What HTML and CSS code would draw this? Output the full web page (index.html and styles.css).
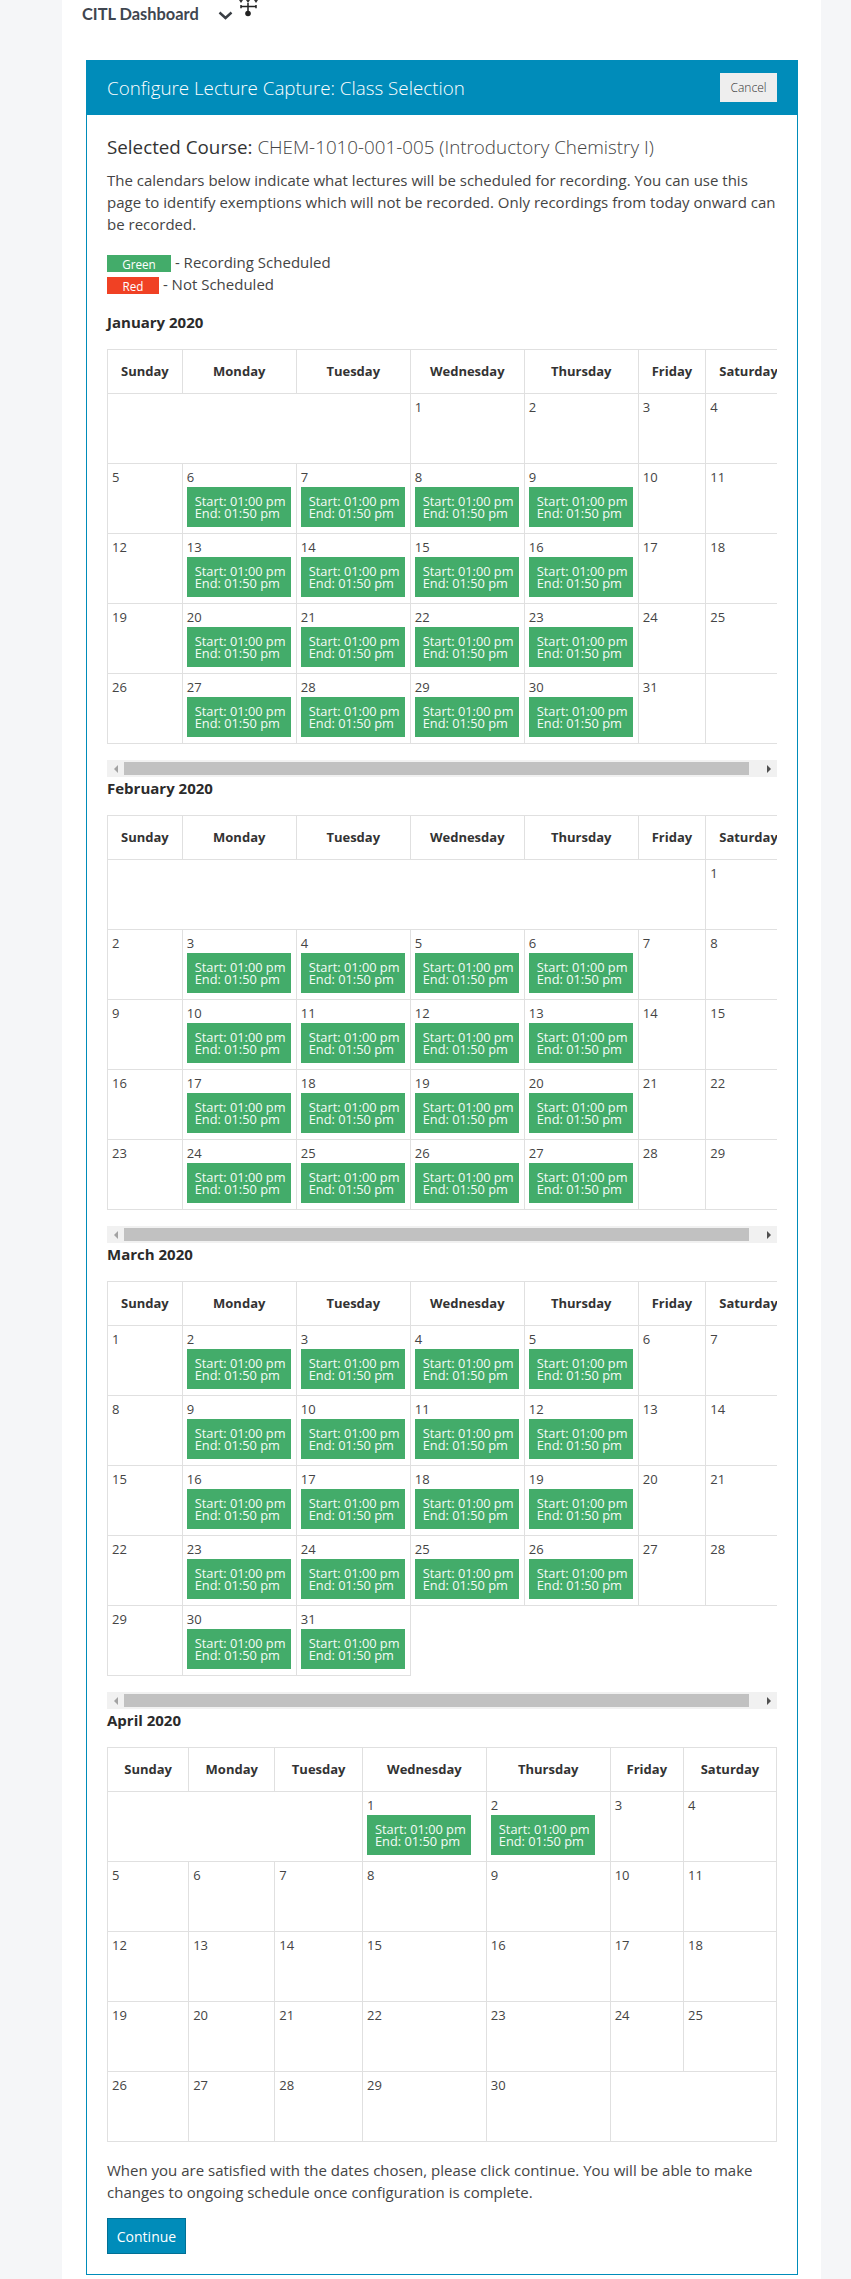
FILE: index.html
```html
<!DOCTYPE html>
<html lang="en">
<head>
<meta charset="utf-8">
<title>Configure Lecture Capture</title>
<link rel="stylesheet" href="styles.css">
</head>
<body>
<main class="page">
  <header class="topbar">
    <span class="brand">CITL Dashboard</span>
    <svg class="chev" width="15" height="9" viewBox="0 0 15 9"><path d="M1.5 1.5 7.5 7 13.5 1.5" fill="none" stroke="#3a3f45" stroke-width="2.4"/></svg>
    <svg class="grip" width="20" height="17" viewBox="0 0 20 17"><path d="M0 0h4L2 3zM7 0h4L9 3zM15 0h4L17 3z" fill="#333"/><path d="M2 6.6h15M9 3v9" fill="none" stroke="#222" stroke-width="1.5"/><path d="M2 5v3.2M17 5v3.2" stroke="#222" stroke-width="1.5"/><circle cx="9" cy="13.5" r="2.8" fill="#222"/></svg>
  </header>
  <section class="panel">
    <div class="panel-head">
      <h1>Configure Lecture Capture: Class Selection</h1>
      <button class="cancel">Cancel</button>
    </div>
    <div class="panel-body">
      <h2 class="course">Selected Course: <span>CHEM-1010-001-005 (Introductory Chemistry I)</span></h2>
      <p class="intro">The calendars below indicate what lectures will be scheduled for recording. You can use this page to identify exemptions which will not be recorded. Only recordings from today onward can be recorded.</p>
      <div class="legend">
        <div><span class="badge green">Green</span> - Recording Scheduled</div>
        <div><span class="badge red">Red</span> - Not Scheduled</div>
      </div>

      <h3 class="month first">January 2020</h3>
      <div class="clip"><table class="cal">
        <thead><tr><th>Sunday</th><th>Monday</th><th>Tuesday</th><th>Wednesday</th><th>Thursday</th><th>Friday</th><th>Saturday</th></tr></thead>
        <tbody>
          <tr><td colspan="3"></td><td>1</td><td>2</td><td>3</td><td>4</td></tr>
          <tr><td>5</td><td>6<div class="slot">Start: 01:00 pm<br>End: 01:50 pm</div></td><td>7<div class="slot">Start: 01:00 pm<br>End: 01:50 pm</div></td><td>8<div class="slot">Start: 01:00 pm<br>End: 01:50 pm</div></td><td>9<div class="slot">Start: 01:00 pm<br>End: 01:50 pm</div></td><td>10</td><td>11</td></tr>
          <tr><td>12</td><td>13<div class="slot">Start: 01:00 pm<br>End: 01:50 pm</div></td><td>14<div class="slot">Start: 01:00 pm<br>End: 01:50 pm</div></td><td>15<div class="slot">Start: 01:00 pm<br>End: 01:50 pm</div></td><td>16<div class="slot">Start: 01:00 pm<br>End: 01:50 pm</div></td><td>17</td><td>18</td></tr>
          <tr><td>19</td><td>20<div class="slot">Start: 01:00 pm<br>End: 01:50 pm</div></td><td>21<div class="slot">Start: 01:00 pm<br>End: 01:50 pm</div></td><td>22<div class="slot">Start: 01:00 pm<br>End: 01:50 pm</div></td><td>23<div class="slot">Start: 01:00 pm<br>End: 01:50 pm</div></td><td>24</td><td>25</td></tr>
          <tr><td>26</td><td>27<div class="slot">Start: 01:00 pm<br>End: 01:50 pm</div></td><td>28<div class="slot">Start: 01:00 pm<br>End: 01:50 pm</div></td><td>29<div class="slot">Start: 01:00 pm<br>End: 01:50 pm</div></td><td>30<div class="slot">Start: 01:00 pm<br>End: 01:50 pm</div></td><td>31</td><td></td></tr>
        </tbody>
      </table></div>
      <div class="scrollbar"><span class="sb-btn"><i class="arrow left"></i></span><span class="thumb"></span><span class="sb-btn"><i class="arrow right"></i></span></div>

      <h3 class="month">February 2020</h3>
      <div class="clip"><table class="cal">
        <thead><tr><th>Sunday</th><th>Monday</th><th>Tuesday</th><th>Wednesday</th><th>Thursday</th><th>Friday</th><th>Saturday</th></tr></thead>
        <tbody>
          <tr><td colspan="6"></td><td>1</td></tr>
          <tr><td>2</td><td>3<div class="slot">Start: 01:00 pm<br>End: 01:50 pm</div></td><td>4<div class="slot">Start: 01:00 pm<br>End: 01:50 pm</div></td><td>5<div class="slot">Start: 01:00 pm<br>End: 01:50 pm</div></td><td>6<div class="slot">Start: 01:00 pm<br>End: 01:50 pm</div></td><td>7</td><td>8</td></tr>
          <tr><td>9</td><td>10<div class="slot">Start: 01:00 pm<br>End: 01:50 pm</div></td><td>11<div class="slot">Start: 01:00 pm<br>End: 01:50 pm</div></td><td>12<div class="slot">Start: 01:00 pm<br>End: 01:50 pm</div></td><td>13<div class="slot">Start: 01:00 pm<br>End: 01:50 pm</div></td><td>14</td><td>15</td></tr>
          <tr><td>16</td><td>17<div class="slot">Start: 01:00 pm<br>End: 01:50 pm</div></td><td>18<div class="slot">Start: 01:00 pm<br>End: 01:50 pm</div></td><td>19<div class="slot">Start: 01:00 pm<br>End: 01:50 pm</div></td><td>20<div class="slot">Start: 01:00 pm<br>End: 01:50 pm</div></td><td>21</td><td>22</td></tr>
          <tr><td>23</td><td>24<div class="slot">Start: 01:00 pm<br>End: 01:50 pm</div></td><td>25<div class="slot">Start: 01:00 pm<br>End: 01:50 pm</div></td><td>26<div class="slot">Start: 01:00 pm<br>End: 01:50 pm</div></td><td>27<div class="slot">Start: 01:00 pm<br>End: 01:50 pm</div></td><td>28</td><td>29</td></tr>
        </tbody>
      </table></div>
      <div class="scrollbar"><span class="sb-btn"><i class="arrow left"></i></span><span class="thumb"></span><span class="sb-btn"><i class="arrow right"></i></span></div>

      <h3 class="month">March 2020</h3>
      <div class="clip"><table class="cal">
        <thead><tr><th>Sunday</th><th>Monday</th><th>Tuesday</th><th>Wednesday</th><th>Thursday</th><th>Friday</th><th>Saturday</th></tr></thead>
        <tbody>
          <tr><td>1</td><td>2<div class="slot">Start: 01:00 pm<br>End: 01:50 pm</div></td><td>3<div class="slot">Start: 01:00 pm<br>End: 01:50 pm</div></td><td>4<div class="slot">Start: 01:00 pm<br>End: 01:50 pm</div></td><td>5<div class="slot">Start: 01:00 pm<br>End: 01:50 pm</div></td><td>6</td><td>7</td></tr>
          <tr><td>8</td><td>9<div class="slot">Start: 01:00 pm<br>End: 01:50 pm</div></td><td>10<div class="slot">Start: 01:00 pm<br>End: 01:50 pm</div></td><td>11<div class="slot">Start: 01:00 pm<br>End: 01:50 pm</div></td><td>12<div class="slot">Start: 01:00 pm<br>End: 01:50 pm</div></td><td>13</td><td>14</td></tr>
          <tr><td>15</td><td>16<div class="slot">Start: 01:00 pm<br>End: 01:50 pm</div></td><td>17<div class="slot">Start: 01:00 pm<br>End: 01:50 pm</div></td><td>18<div class="slot">Start: 01:00 pm<br>End: 01:50 pm</div></td><td>19<div class="slot">Start: 01:00 pm<br>End: 01:50 pm</div></td><td>20</td><td>21</td></tr>
          <tr><td>22</td><td>23<div class="slot">Start: 01:00 pm<br>End: 01:50 pm</div></td><td>24<div class="slot">Start: 01:00 pm<br>End: 01:50 pm</div></td><td>25<div class="slot">Start: 01:00 pm<br>End: 01:50 pm</div></td><td>26<div class="slot">Start: 01:00 pm<br>End: 01:50 pm</div></td><td>27</td><td>28</td></tr>
          <tr><td>29</td><td>30<div class="slot">Start: 01:00 pm<br>End: 01:50 pm</div></td><td>31<div class="slot">Start: 01:00 pm<br>End: 01:50 pm</div></td><td class="open" colspan="4"></td></tr>
        </tbody>
      </table></div>
      <div class="scrollbar"><span class="sb-btn"><i class="arrow left"></i></span><span class="thumb"></span><span class="sb-btn"><i class="arrow right"></i></span></div>

      <h3 class="month">April 2020</h3>
      <div class="clip"><table class="cal">
        <thead><tr><th>Sunday</th><th>Monday</th><th>Tuesday</th><th>Wednesday</th><th>Thursday</th><th>Friday</th><th>Saturday</th></tr></thead>
        <tbody>
          <tr><td colspan="3"></td><td>1<div class="slot">Start: 01:00 pm<br>End: 01:50 pm</div></td><td>2<div class="slot">Start: 01:00 pm<br>End: 01:50 pm</div></td><td>3</td><td>4</td></tr>
          <tr><td>5</td><td>6</td><td>7</td><td>8</td><td>9</td><td>10</td><td>11</td></tr>
          <tr><td>12</td><td>13</td><td>14</td><td>15</td><td>16</td><td>17</td><td>18</td></tr>
          <tr><td>19</td><td>20</td><td>21</td><td>22</td><td>23</td><td>24</td><td>25</td></tr>
          <tr><td>26</td><td>27</td><td>28</td><td>29</td><td>30</td><td colspan="2"></td></tr>
        </tbody>
      </table></div>

      <p class="outro">When you are satisfied with the dates chosen, please click continue. You will be able to make changes to ongoing schedule once configuration is complete.</p>
      <button class="continue">Continue</button>
    </div>
  </section>
</main>
</body>
</html>
```
FILE: styles.css
```css
* { box-sizing: border-box; }
html, body { margin: 0; padding: 0; }
body { background: #f5f6f8; font-family: "Open Sans", sans-serif; font-size: 13px; color: #333; }
.page { margin: 0 30px 0 62px; background: #fff; padding: 0 23px 4px 24px; }
.topbar { height: 60px; display: flex; align-items: flex-start; margin-left: -4px; }
.brand { font-family: Lato, sans-serif; font-weight: 700; font-size: 16.4px; line-height: 28px; color: #3f4650; }
.chev { margin: 11px 0 0 19px; flex: none; }
.grip { margin: 0 0 0 6px; flex: none; }
.panel { border: 1px solid #008cba; }
.panel-head { background: #008cba; height: 55px; margin: -1px -1px 0; padding: 0 21px; display: flex; align-items: center; justify-content: space-between; }
.panel-head h1 { margin: 0; font-size: 18.8px; font-weight: 300; color: #fff; }
.cancel { width: 57px; height: 29px; background: #eee; border: 0; font: 300 12px "Open Sans", sans-serif; color: #333; padding: 0; }
.panel-body { padding: 18px 20px 20px; }
.course { margin: 0; font-size: 18.8px; font-weight: 400; line-height: 28px; color: #333; }
.course span { font-weight: 300; color: #444; }
.intro { margin: 8px 0 0; font-size: 15px; line-height: 22px; color: #444; }
.legend { margin-top: 16px; font-size: 15px; line-height: 22px; color: #444; }
.badge { display: inline-block; height: 17px; line-height: 18px; font-size: 11.7px; color: #fff; vertical-align: middle; padding: 0; text-align: center; }
.badge.green { background: #43ac6a; width: 64px; }
.badge.red { background: #f04124; width: 52px; }
.month { margin: 0 0 16px; font-size: 15px; font-weight: 700; line-height: 22px; color: #2b2b2b; }
.month.first { margin-top: 16px; }
.clip { overflow: hidden; }
.cal { border-collapse: collapse; width: 100%; }
.cal th, .cal td { border: 1px solid #e0e0e0; }
.cal th { height: 44px; padding: 0 13px 2px; font-size: 13px; font-weight: 700; color: #333; white-space: nowrap; }
.cal td { height: 70px; vertical-align: top; padding: 4px 5px 0 4px; font-size: 13px; line-height: 19px; color: #444; }
.cal td.open { border-right: 0; border-bottom: 0; }
.slot { width: 104px; height: 40px; padding: 8px; background: #43ac6a; color: #f4fbf6; font-size: 12.8px; line-height: 12px; white-space: nowrap; }
.scrollbar { height: 17px; margin-top: 16px; background: #f1f1f1; display: flex; align-items: center; }
.sb-btn { flex: none; width: 17px; height: 17px; display: flex; align-items: center; justify-content: center; }
.thumb { flex: 1; height: 13px; background: #c1c1c1; margin-right: 11px; }
.arrow { width: 0; height: 0; border-style: solid; border-width: 4px 0 4px 4px; border-color: transparent transparent transparent #505050; }
.arrow.left { border-width: 4px 4px 4px 0; border-color: transparent #a3a3a3 transparent transparent; }
.outro { margin: 17px 0 0; font-size: 15px; line-height: 22px; color: #444; }
.continue { display: block; width: 79px; height: 36px; margin-top: 15px; background: #008cba; border: 1px solid #007095; color: #fff; font: 14px "Open Sans", sans-serif; padding: 0; }
```
